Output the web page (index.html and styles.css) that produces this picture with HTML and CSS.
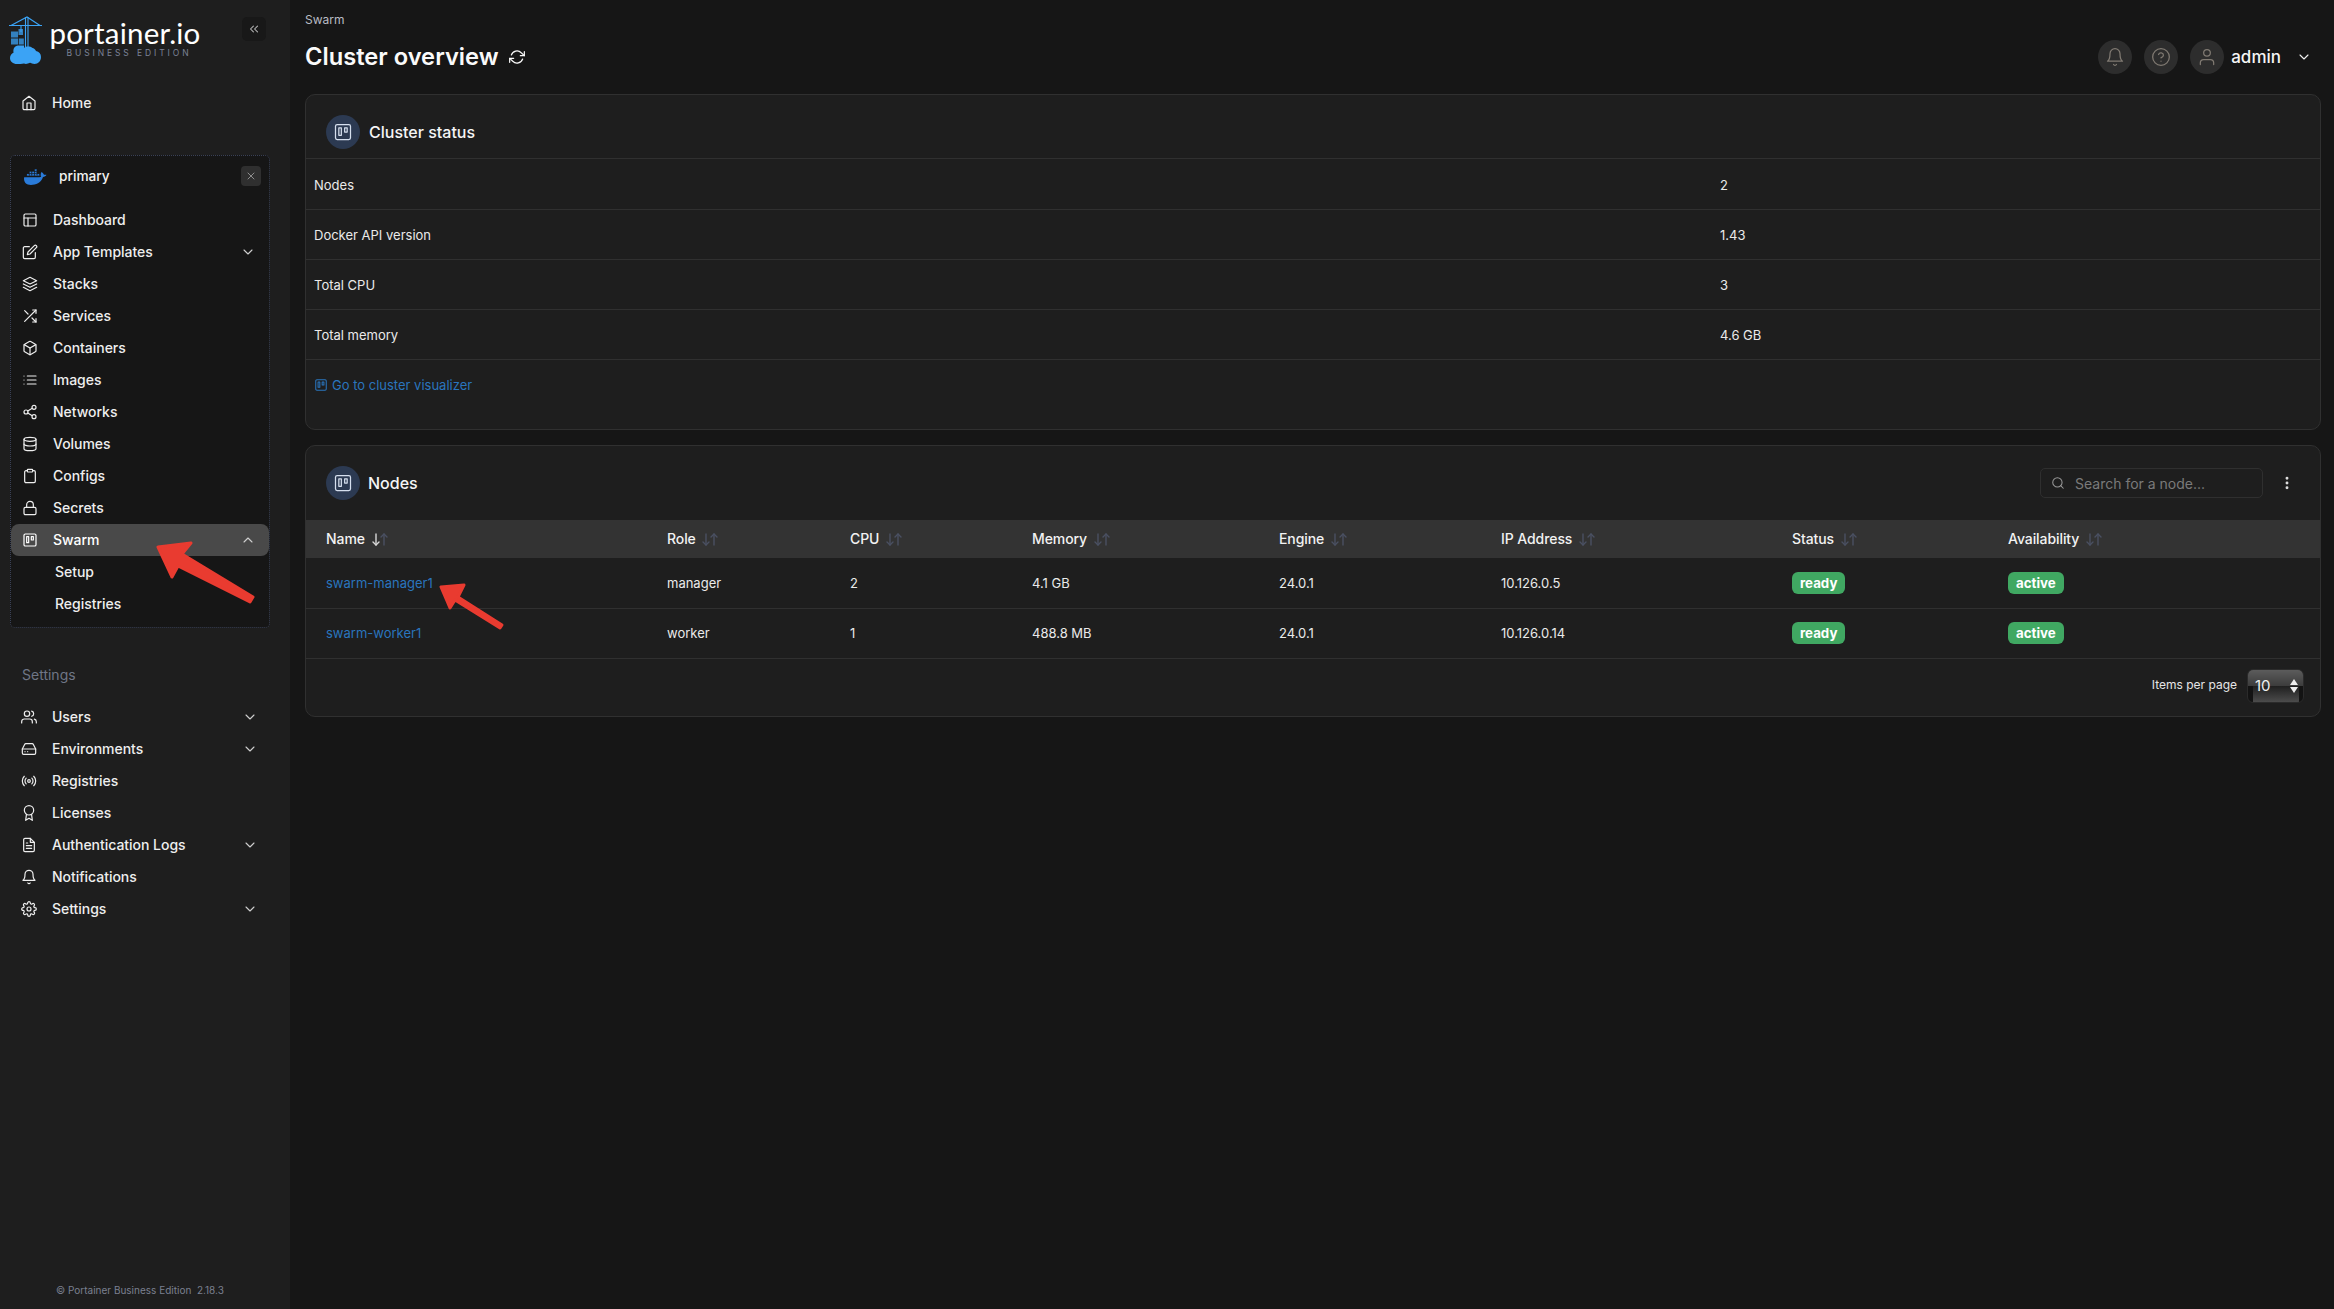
FILE: index.html
```html
<!DOCTYPE html>
<html lang="en">
<head>
<meta charset="utf-8">
<title>Cluster overview</title>
<link rel="stylesheet" href="styles.css">
</head>
<body>
<svg class="sprite" xmlns="http://www.w3.org/2000/svg">
<symbol id="i-home" viewBox="0 0 24 24"><path d="M3 9l9-7 9 7v11a2 2 0 0 1-2 2H5a2 2 0 0 1-2-2z"/><polyline points="9 22 9 12 15 12 15 22"/></symbol>
<symbol id="i-layout" viewBox="0 0 24 24"><rect x="3" y="3" width="18" height="18" rx="2"/><line x1="3" y1="9" x2="21" y2="9"/><line x1="9" y1="21" x2="9" y2="9"/></symbol>
<symbol id="i-edit" viewBox="0 0 24 24"><path d="M11 4H4a2 2 0 0 0-2 2v14a2 2 0 0 0 2 2h14a2 2 0 0 0 2-2v-7"/><path d="M18.5 2.5a2.121 2.121 0 0 1 3 3L12 15l-4 1 1-4 9.5-9.5z"/></symbol>
<symbol id="i-layers" viewBox="0 0 24 24"><polygon points="12 2 2 7 12 12 22 7 12 2"/><polyline points="2 17 12 22 22 17"/><polyline points="2 12 12 17 22 12"/></symbol>
<symbol id="i-shuffle" viewBox="0 0 24 24"><polyline points="16 3 21 3 21 8"/><line x1="4" y1="20" x2="21" y2="3"/><polyline points="21 16 21 21 16 21"/><line x1="15" y1="15" x2="21" y2="21"/><line x1="4" y1="4" x2="9" y2="9"/></symbol>
<symbol id="i-box" viewBox="0 0 24 24"><path d="M21 16V8a2 2 0 0 0-1-1.73l-7-4a2 2 0 0 0-2 0l-7 4A2 2 0 0 0 3 8v8a2 2 0 0 0 1 1.73l7 4a2 2 0 0 0 2 0l7-4A2 2 0 0 0 21 16z"/><polyline points="3.27 6.96 12 12.01 20.73 6.96"/><line x1="12" y1="22.08" x2="12" y2="12"/></symbol>
<symbol id="i-list" viewBox="0 0 24 24"><line x1="8" y1="6" x2="21" y2="6"/><line x1="8" y1="12" x2="21" y2="12"/><line x1="8" y1="18" x2="21" y2="18"/><line x1="3" y1="6" x2="3.01" y2="6"/><line x1="3" y1="12" x2="3.01" y2="12"/><line x1="3" y1="18" x2="3.01" y2="18"/></symbol>
<symbol id="i-share" viewBox="0 0 24 24"><circle cx="18" cy="5" r="3"/><circle cx="6" cy="12" r="3"/><circle cx="18" cy="19" r="3"/><line x1="8.59" y1="13.51" x2="15.42" y2="17.49"/><line x1="15.41" y1="6.51" x2="8.59" y2="10.49"/></symbol>
<symbol id="i-database" viewBox="0 0 24 24"><ellipse cx="12" cy="5" rx="9" ry="3"/><path d="M21 12c0 1.66-4 3-9 3s-9-1.34-9-3"/><path d="M3 5v14c0 1.66 4 3 9 3s9-1.34 9-3V5"/></symbol>
<symbol id="i-clipboard" viewBox="0 0 24 24"><path d="M16 4h2a2 2 0 0 1 2 2v14a2 2 0 0 1-2 2H6a2 2 0 0 1-2-2V6a2 2 0 0 1 2-2h2"/><rect x="8" y="2" width="8" height="4" rx="1"/></symbol>
<symbol id="i-lock" viewBox="0 0 24 24"><rect x="3" y="11" width="18" height="11" rx="2"/><path d="M7 11V7a5 5 0 0 1 10 0v4"/></symbol>
<symbol id="i-trello" viewBox="0 0 24 24"><rect x="3" y="3" width="18" height="18" rx="2"/><rect x="7" y="7" width="3" height="9"/><rect x="14" y="7" width="3" height="5"/></symbol>
<symbol id="i-users" viewBox="0 0 24 24"><path d="M17 21v-2a4 4 0 0 0-4-4H5a4 4 0 0 0-4 4v2"/><circle cx="9" cy="7" r="4"/><path d="M23 21v-2a4 4 0 0 0-3-3.87"/><path d="M16 3.13a4 4 0 0 1 0 7.75"/></symbol>
<symbol id="i-drive" viewBox="0 0 24 24"><line x1="22" y1="12" x2="2" y2="12"/><path d="M5.45 5.11L2 12v6a2 2 0 0 0 2 2h16a2 2 0 0 0 2-2v-6l-3.45-6.89A2 2 0 0 0 16.76 4H7.24a2 2 0 0 0-1.79 1.11z"/><line x1="6" y1="16" x2="6.01" y2="16"/><line x1="10" y1="16" x2="10.01" y2="16"/></symbol>
<symbol id="i-radio" viewBox="0 0 24 24"><circle cx="12" cy="12" r="2"/><path d="M16.24 7.76a6 6 0 0 1 0 8.49m-8.48-.01a6 6 0 0 1 0-8.49m11.31-2.82a10 10 0 0 1 0 14.14m-14.14 0a10 10 0 0 1 0-14.14"/></symbol>
<symbol id="i-award" viewBox="0 0 24 24"><circle cx="12" cy="8" r="7"/><polyline points="8.21 13.89 7 23 12 20 17 23 15.79 13.88"/></symbol>
<symbol id="i-file" viewBox="0 0 24 24"><path d="M14 2H6a2 2 0 0 0-2 2v16a2 2 0 0 0 2 2h12a2 2 0 0 0 2-2V8z"/><polyline points="14 2 14 8 20 8"/><line x1="16" y1="13" x2="8" y2="13"/><line x1="16" y1="17" x2="8" y2="17"/><polyline points="10 9 9 9 8 9"/></symbol>
<symbol id="i-bell" viewBox="0 0 24 24"><path d="M18 8A6 6 0 0 0 6 8c0 7-3 9-3 9h18s-3-2-3-9"/><path d="M13.73 21a2 2 0 0 1-3.46 0"/></symbol>
<symbol id="i-gear" viewBox="0 0 24 24"><circle cx="12" cy="12" r="3"/><path d="M19.4 15a1.65 1.65 0 0 0 .33 1.82l.06.06a2 2 0 0 1 0 2.83 2 2 0 0 1-2.83 0l-.06-.06a1.65 1.65 0 0 0-1.82-.33 1.65 1.65 0 0 0-1 1.51V21a2 2 0 0 1-2 2 2 2 0 0 1-2-2v-.09A1.65 1.65 0 0 0 9 19.4a1.65 1.65 0 0 0-1.82.33l-.06.06a2 2 0 0 1-2.83 0 2 2 0 0 1 0-2.83l.06-.06a1.65 1.65 0 0 0 .33-1.82 1.65 1.65 0 0 0-1.51-1H3a2 2 0 0 1-2-2 2 2 0 0 1 2-2h.09A1.65 1.65 0 0 0 4.6 9a1.65 1.65 0 0 0-.33-1.82l-.06-.06a2 2 0 0 1 0-2.83 2 2 0 0 1 2.83 0l.06.06a1.65 1.65 0 0 0 1.82.33H9a1.65 1.65 0 0 0 1-1.51V3a2 2 0 0 1 2-2 2 2 0 0 1 2 2v.09a1.65 1.65 0 0 0 1 1.51 1.65 1.65 0 0 0 1.82-.33l.06-.06a2 2 0 0 1 2.83 0 2 2 0 0 1 0 2.83l-.06.06a1.65 1.65 0 0 0-.33 1.82V9a1.65 1.65 0 0 0 1.51 1H21a2 2 0 0 1 2 2 2 2 0 0 1-2 2h-.09a1.65 1.65 0 0 0-1.51 1z"/></symbol>
<symbol id="i-refresh" viewBox="0 0 24 24"><polyline points="23 4 23 10 17 10"/><polyline points="1 20 1 14 7 14"/><path d="M3.51 9a9 9 0 0 1 14.85-3.36L23 10M1 14l4.64 4.36A9 9 0 0 0 20.49 15"/></symbol>
<symbol id="i-help" viewBox="0 0 24 24"><circle cx="12" cy="12" r="10"/><path d="M9.09 9a3 3 0 0 1 5.83 1c0 2-3 3-3 3"/><line x1="12" y1="17" x2="12.01" y2="17"/></symbol>
<symbol id="i-user" viewBox="0 0 24 24"><path d="M20 21v-2a4 4 0 0 0-4-4H8a4 4 0 0 0-4 4v2"/><circle cx="12" cy="7" r="4"/></symbol>
<symbol id="i-search" viewBox="0 0 24 24"><circle cx="11" cy="11" r="8"/><line x1="21" y1="21" x2="16.65" y2="16.65"/></symbol>
<symbol id="i-more" viewBox="0 0 24 24"><circle cx="12" cy="12" r="1"/><circle cx="12" cy="5" r="1"/><circle cx="12" cy="19" r="1"/></symbol>
<symbol id="i-chevrons" viewBox="0 0 24 24"><polyline points="11 17 6 12 11 7"/><polyline points="18 17 13 12 18 7"/></symbol>
<symbol id="i-down" viewBox="0 0 24 24"><polyline points="6 9 12 15 18 9"/></symbol>
<symbol id="i-up" viewBox="0 0 24 24"><polyline points="18 15 12 9 6 15"/></symbol>
<symbol id="i-x" viewBox="0 0 24 24"><line x1="18" y1="6" x2="6" y2="18"/><line x1="6" y1="6" x2="18" y2="18"/></symbol>
<symbol id="i-adown" viewBox="0 0 8 13"><line x1="4" y1="1" x2="4" y2="12"/><polyline points="1 9 4 12 7 9"/></symbol>
<symbol id="i-aup" viewBox="0 0 8 13"><line x1="4" y1="12" x2="4" y2="1"/><polyline points="1 4 4 1 7 4"/></symbol>
</svg>

<div class="app">
  <aside class="sidebar">
    <div class="brand">
      <svg class="logo-mark" viewBox="0 0 36 48" xmlns="http://www.w3.org/2000/svg">
        <g class="crane">
          <path d="M0 9.500H33M2 9.500L18 1L31 9.500"/>
          <path d="M16.500 1V34M19 1V34"/>
          <path d="M12 9.500V16"/>
        </g>
        <rect class="logo-box" x="9.500" y="13" width="4.500" height="6"/>
        <rect class="logo-box" x="2" y="15.500" width="7" height="6"/>
        <rect class="logo-box" x="2" y="22.500" width="7" height="6"/>
        <rect class="logo-box" x="9.800" y="22.500" width="5" height="6"/>
        <path class="logo-cloud" d="M8 48c-4 0-7-2.500-7-6 0-2.500 1.500-4.500 3.500-5.200C4 33.500 5 30 9 29.500h6V32c2-1.800 6-1.800 8-.3 2 .4 3.500 1.800 4 3.300 3 .6 5 2.800 5 6 0 3.800-2.800 7-6.500 7-2 0-3.200-.8-4.500-1.200-2 1-4 1.400-6 .8-2 .5-4 .4-6 .4z"/>
      </svg>
      <div class="wordmark">
        <span class="wordmark-name">portainer.io</span>
        <span class="wordmark-sub">BUSINESS EDITION</span>
      </div>
      <button class="collapse" type="button"><svg class="ic ic-14"><use href="#i-chevrons"/></svg></button>
    </div>

    <nav class="nav-list nav-top">
      <a class="nav-item"><svg class="ic"><use href="#i-home"/></svg><span>Home</span></a>
    </nav>

    <section class="env">
      <div class="env-head">
        <svg class="docker" viewBox="0 0 24 17" xmlns="http://www.w3.org/2000/svg">
          <path d="M23.800 7.100c-.6-.4-2-.6-3-.3-.1-1-.8-1.900-1.800-2.600l-.6-.4-.4.600c-.5.800-.7 2-.6 2.900.1.500.2 1 .5 1.400-.4.200-1 .5-1.900.5H.2c-.3 1.500-.3 3.200.5 4.700.7 1.300 1.800 2.300 3.300 2.900 2 .7 4.700.6 7 0 2.600-.6 4.800-1.800 6.500-3.700 1.200-1.300 1.900-2.900 2.300-4.200h.3c1.100 0 2-.4 2.700-1.200.3-.3.500-.6.600-.9z"/>
          <rect x="3" y="5.800" width="2.200" height="2"/><rect x="5.700" y="5.800" width="2.200" height="2"/><rect x="8.400" y="5.800" width="2.200" height="2"/><rect x="11.100" y="5.800" width="2.200" height="2"/><rect x="13.800" y="5.800" width="2.200" height="2"/>
          <rect x="5.700" y="3.300" width="2.200" height="2"/><rect x="8.400" y="3.300" width="2.200" height="2"/><rect x="11.100" y="3.300" width="2.200" height="2"/>
          <rect x="11.100" y=".8" width="2.200" height="2"/>
        </svg>
        <span class="env-name">primary</span>
        <button class="env-close" type="button"><svg class="ic ic-12"><use href="#i-x"/></svg></button>
      </div>
      <nav class="nav-list">
        <a class="nav-item"><svg class="ic"><use href="#i-layout"/></svg><span>Dashboard</span></a>
        <a class="nav-item"><svg class="ic"><use href="#i-edit"/></svg><span>App Templates</span><svg class="ic chev"><use href="#i-down"/></svg></a>
        <a class="nav-item"><svg class="ic"><use href="#i-layers"/></svg><span>Stacks</span></a>
        <a class="nav-item"><svg class="ic"><use href="#i-shuffle"/></svg><span>Services</span></a>
        <a class="nav-item"><svg class="ic"><use href="#i-box"/></svg><span>Containers</span></a>
        <a class="nav-item"><svg class="ic"><use href="#i-list"/></svg><span>Images</span></a>
        <a class="nav-item"><svg class="ic"><use href="#i-share"/></svg><span>Networks</span></a>
        <a class="nav-item"><svg class="ic"><use href="#i-database"/></svg><span>Volumes</span></a>
        <a class="nav-item"><svg class="ic"><use href="#i-clipboard"/></svg><span>Configs</span></a>
        <a class="nav-item"><svg class="ic"><use href="#i-lock"/></svg><span>Secrets</span></a>
        <a class="nav-item is-active"><svg class="ic"><use href="#i-trello"/></svg><span>Swarm</span><svg class="ic chev"><use href="#i-up"/></svg></a>
        <a class="nav-item nav-sub"><span>Setup</span></a>
        <a class="nav-item nav-sub"><span>Registries</span></a>
      </nav>
    </section>

    <div class="nav-label">Settings</div>
    <nav class="nav-list nav-settings">
      <a class="nav-item"><svg class="ic"><use href="#i-users"/></svg><span>Users</span><svg class="ic chev"><use href="#i-down"/></svg></a>
      <a class="nav-item"><svg class="ic"><use href="#i-drive"/></svg><span>Environments</span><svg class="ic chev"><use href="#i-down"/></svg></a>
      <a class="nav-item"><svg class="ic"><use href="#i-radio"/></svg><span>Registries</span></a>
      <a class="nav-item"><svg class="ic"><use href="#i-award"/></svg><span>Licenses</span></a>
      <a class="nav-item"><svg class="ic"><use href="#i-file"/></svg><span>Authentication Logs</span><svg class="ic chev"><use href="#i-down"/></svg></a>
      <a class="nav-item"><svg class="ic"><use href="#i-bell"/></svg><span>Notifications</span></a>
      <a class="nav-item"><svg class="ic"><use href="#i-gear"/></svg><span>Settings</span><svg class="ic chev"><use href="#i-down"/></svg></a>
    </nav>

    <footer class="side-foot">© Portainer Business Edition&nbsp; 2.18.3</footer>
  </aside>

  <main class="main">
    <header class="topbar">
      <div class="crumbs">
        <div class="crumb">Swarm</div>
        <h1 class="page-title">Cluster overview <svg class="ic refresh"><use href="#i-refresh"/></svg></h1>
      </div>
      <div class="user-area">
        <span class="round"><svg class="ic ic-20"><use href="#i-bell"/></svg></span>
        <span class="round"><svg class="ic ic-20"><use href="#i-help"/></svg></span>
        <span class="round"><svg class="ic ic-20"><use href="#i-user"/></svg></span>
        <span class="user-name">admin</span>
        <svg class="ic user-chev"><use href="#i-down"/></svg>
      </div>
    </header>

    <section class="card card-status">
      <div class="card-head">
        <span class="card-badge"><svg class="ic ic-20"><use href="#i-trello"/></svg></span>
        <h2 class="card-title">Cluster status</h2>
      </div>
      <table class="kv">
        <tr><td>Nodes</td><td>2</td></tr>
        <tr><td>Docker API version</td><td>1.43</td></tr>
        <tr><td>Total CPU</td><td>3</td></tr>
        <tr><td>Total memory</td><td>4.6 GB</td></tr>
      </table>
      <div class="visualizer"><a class="link"><svg class="ic ic-14"><use href="#i-trello"/></svg>Go to cluster visualizer</a></div>
    </section>

    <section class="card card-nodes">
      <div class="card-head">
        <span class="card-badge"><svg class="ic ic-20"><use href="#i-trello"/></svg></span>
        <h2 class="card-title">Nodes</h2>
        <label class="search"><svg class="ic ic-14"><use href="#i-search"/></svg><span>Search for a node...</span></label>
        <svg class="ic kebab"><use href="#i-more"/></svg>
      </div>
      <table class="nodes">
        <colgroup><col class="c1"><col class="c2"><col class="c3"><col class="c4"><col class="c5"><col class="c6"><col class="c7"><col class="c8"></colgroup>
        <thead>
          <tr>
            <th>Name <span class="sort is-sorted"><svg><use href="#i-adown"/></svg><svg><use href="#i-aup"/></svg></span></th>
            <th>Role <span class="sort"><svg><use href="#i-adown"/></svg><svg><use href="#i-aup"/></svg></span></th>
            <th>CPU <span class="sort"><svg><use href="#i-adown"/></svg><svg><use href="#i-aup"/></svg></span></th>
            <th>Memory <span class="sort"><svg><use href="#i-adown"/></svg><svg><use href="#i-aup"/></svg></span></th>
            <th>Engine <span class="sort"><svg><use href="#i-adown"/></svg><svg><use href="#i-aup"/></svg></span></th>
            <th>IP Address <span class="sort"><svg><use href="#i-adown"/></svg><svg><use href="#i-aup"/></svg></span></th>
            <th>Status <span class="sort"><svg><use href="#i-adown"/></svg><svg><use href="#i-aup"/></svg></span></th>
            <th>Availability <span class="sort"><svg><use href="#i-adown"/></svg><svg><use href="#i-aup"/></svg></span></th>
          </tr>
        </thead>
        <tbody>
          <tr><td><a class="link">swarm-manager1</a></td><td>manager</td><td>2</td><td>4.1 GB</td><td>24.0.1</td><td>10.126.0.5</td><td><span class="pill">ready</span></td><td><span class="pill">active</span></td></tr>
          <tr><td><a class="link">swarm-worker1</a></td><td>worker</td><td>1</td><td>488.8 MB</td><td>24.0.1</td><td>10.126.0.14</td><td><span class="pill">ready</span></td><td><span class="pill">active</span></td></tr>
        </tbody>
      </table>
      <div class="pager">
        <span class="pager-label">Items per page</span>
        <span class="select"><span class="select-face"><span>10</span><span class="select-arrows"></span></span></span>
      </div>
    </section>
  </main>
</div>

<svg class="mark mark-swarm" viewBox="0 0 100 66" xmlns="http://www.w3.org/2000/svg"><path d="M3 7 L36 3 L27 14 L98 57 L95 62 L23 26 L17 37 Z"/></svg>
<svg class="mark mark-node" viewBox="0 0 68 50" xmlns="http://www.w3.org/2000/svg"><path d="M3 5 L26 3 L20 15 L64 43 L62 46 L17 18 L12 26 Z"/></svg>
</body>
</html>
```
FILE: styles.css
```css
* { box-sizing: border-box; }
html, body { margin: 0; height: 100%; }
body {
  background: #161616;
  color: #f2f2f2;
  font-family: Inter, "Liberation Sans", sans-serif;
  font-size: 14px;
  overflow: hidden;
  position: relative;
}
.sprite { display: none; }
.ic {
  width: 16px;
  height: 16px;
  fill: none;
  stroke: currentColor;
  stroke-width: 1.8;
  stroke-linecap: round;
  stroke-linejoin: round;
  flex: none;
}
.ic-12 { width: 12px; height: 12px; }
.ic-14 { width: 14px; height: 14px; }
.ic-20 { width: 20px; height: 20px; stroke-width: 1.5; }

.app { display: flex; height: 1309px; }

/* Sidebar */
.sidebar {
  width: 290px;
  flex: none;
  background: #1e1e1e;
  display: flex;
  flex-direction: column;
}
.brand {
  height: 87px;
  display: flex;
  align-items: flex-start;
  position: relative;
  padding: 16px 24px 0 9px;
}
.logo-mark { width: 36px; height: 48px; flex: none; }
.crane path { fill: none; stroke: #3ba3f5; stroke-width: 1.1; }
.logo-box { fill: #3ba3f5; opacity: .75; }
.logo-cloud { fill: #3ba3f5; }
.wordmark {
  display: flex;
  flex-direction: column;
  align-items: center;
  margin-left: 5px;
  width: 150px;
}
.wordmark-name {
  font-family: Lato, Inter, sans-serif;
  font-size: 29.500px;
  line-height: 34px;
  color: #fff;
  letter-spacing: .2px;
}
.wordmark-sub {
  font-size: 8.500px;
  line-height: 10px;
  letter-spacing: 2.900px;
  color: #7b8296;
  margin-top: -2px;
  margin-left: 8px;
}
.collapse {
  margin-left: auto;
  margin-top: 1px;
  width: 24px;
  height: 24px;
  border: 0;
  border-radius: 5px;
  background: #181818;
  color: #b5b5b5;
  display: flex;
  align-items: center;
  justify-content: center;
  padding: 0;
}
.nav-list { display: flex; flex-direction: column; }
.nav-item {
  height: 32px;
  display: flex;
  align-items: center;
  gap: 15px;
  padding: 0 12px 0 11px;
  color: #eee;
  border-radius: 8px;
  font-weight: 500;
  letter-spacing: -.03px;
}
.nav-item span { flex: 1; margin-bottom: 2px; }
.chev { stroke-width: 1.6; color: #d0d0d0; margin-right: 1px; }
.nav-top .nav-item, .nav-settings .nav-item { padding: 0 31px 0 21px; }
.env {
  margin: 36px 20px 0 10px;
  height: 473px;
  background: #161616;
  border: 1px dotted #3a4156;
  border-radius: 5px;
  padding-top: 4px;
}
.env-head {
  height: 32px;
  display: flex;
  align-items: center;
  padding: 0 8px 0 13px;
  margin-bottom: 12px;
}
.docker { width: 23px; height: 17px; fill: #2a7bd9; flex: none; }
.docker rect { stroke: #161616; stroke-width: .25; }
.env-name { flex: 1; margin-left: 12px; font-weight: 500; color: #f2f2f2; font-size: 13.700px; }
.env-close {
  width: 20px;
  height: 20px;
  border: 0;
  border-radius: 4px;
  background: #2f2f2f;
  color: #9a9a9a;
  padding: 0;
  display: flex;
  align-items: center;
  justify-content: center;
}
.is-active { background: #494949; color: #fff; }
.nav-sub { padding-left: 44px; }
.nav-label {
  margin: 37px 0 16px 22px;
  line-height: 20px;
  color: #6f7686;
  font-weight: 400;
}
.side-foot {
  margin-top: auto;
  margin-bottom: 12px;
  padding-left: 56px;
  font-size: 10px;
  line-height: 14px;
  color: #7b8090;
  white-space: nowrap;
}

/* Main */
.main { flex: 1; min-width: 0; padding: 0 13px 0 15px; }
.topbar { height: 94px; display: flex; justify-content: space-between; }
.crumb { font-size: 12px; line-height: 16px; color: #b9bcc4; margin-top: 12px; }
.page-title {
  margin: 13px 0 0;
  font-size: 23.700px;
  line-height: 32px;
  font-weight: 600;
  color: #fafafa;
  display: flex;
  align-items: center;
  gap: 10px;
}
.refresh { margin-top: -1px; }
.user-area {
  display: flex;
  align-items: center;
  height: 34px;
  margin-top: 40px;
  padding-right: 9px;
}
.round {
  width: 34px;
  height: 34px;
  border-radius: 50%;
  background: #2d2d2d;
  color: #807a72;
  display: flex;
  align-items: center;
  justify-content: center;
  margin-right: 12px;
}
.round:nth-child(3) { margin-right: 7px; }
.user-name { font-size: 17px; font-weight: 500; color: #f5f5f5; }
.user-chev { margin-left: 15px; stroke-width: 1.6; }

.card {
  background: #1e1e1e;
  border: 1px solid #303030;
  border-radius: 10px;
  overflow: hidden;
}
.card-status { height: 336px; }
.card-nodes { height: 272px; margin-top: 15px; }
.card-head {
  height: 64px;
  display: flex;
  align-items: center;
  padding: 11px 20px 0;
  border-bottom: 1px solid #303030;
}
.card-nodes .card-head { height: 74px; padding-top: 0; border-bottom: 0; }
.card-badge {
  width: 34px;
  height: 34px;
  border-radius: 50%;
  background: #2c3a52;
  color: #d5dfee;
  display: flex;
  align-items: center;
  justify-content: center;
  flex: none;
}
.card-title { margin: 0 0 0 9px; font-size: 16px; line-height: 20px; font-weight: 500; color: #f5f5f5; }
.card-nodes .card-title { margin-left: 8px; }
.kv { width: 100%; border-collapse: collapse; table-layout: fixed; font-size: 13px; }
.kv td { height: 50px; padding: 2px 8px 0; border-bottom: 1px solid #303030; color: #eaeaea; }
.kv td:first-child { width: 1406px; }
.visualizer { height: 50px; padding-left: 8px; display: flex; align-items: center; }
.link { color: #2a75bd; font-size: 13px; display: inline-flex; align-items: center; gap: 4px; }

.search {
  margin-left: auto;
  width: 223px;
  height: 30px;
  border: 1px solid #2f2f2f;
  border-radius: 5px;
  display: flex;
  align-items: center;
  gap: 10px;
  padding: 0 10px;
  font-size: 14px;
  color: #7a7a7a;
}
.search .ic { color: #999; }
.kebab { margin-left: 16px; margin-right: 5px; color: #ddd; stroke-width: 2.400; }

.nodes { width: 100%; border-collapse: collapse; table-layout: fixed; font-size: 13px; }
.c1 { width: 341px; }
.c2 { width: 183px; }
.c3 { width: 182px; }
.c4 { width: 247px; }
.c5 { width: 222px; }
.c6 { width: 291px; }
.c7 { width: 216px; }
.nodes th {
  height: 38px;
  background: #333;
  text-align: left;
  font-weight: 500;
  font-size: 14px;
  padding: 0 0 2px 20px;
  color: #f2f2f2;
  white-space: nowrap;
  letter-spacing: -.08px;
}
.sort { display: inline-flex; margin-left: 3px; vertical-align: -2px; color: #4a5062; }
.sort svg { width: 8px; height: 13px; fill: none; stroke: currentColor; stroke-width: 1.4; stroke-linecap: round; stroke-linejoin: round; }
.is-sorted svg:first-child { color: #d8d8d8; }
.nodes td { height: 50px; padding: 0 0 0 20px; border-bottom: 1px solid #303030; color: #eaeaea; }
.pill {
  display: inline-block;
  padding: 0 8px;
  height: 22px;
  line-height: 22px;
  border-radius: 6px;
  background: #40a862;
  color: #fff;
  font-weight: 700;
  font-size: 13.300px;
}
.pager {
  height: 60px;
  display: flex;
  align-items: center;
  justify-content: flex-end;
  padding: 0 16px 6px 0;
  gap: 10px;
  font-size: 12px;
  color: #e6e6e6;
}
.pager-label { margin-bottom: 2px; }
.select {
  width: 57px;
  height: 34px;
  background: #131313;
  border: 1px solid #2b2b2b;
  border-radius: 6px;
  display: flex;
}
.select-face {
  width: 100%;
  display: flex;
  align-items: center;
  justify-content: space-between;
  padding: 0 5px 0 7px;
  font-size: 15px;
  color: #f0f0f0;
  background:
    linear-gradient(#5c5c5c, #3c3c3c) top / 100% 50% no-repeat,
    linear-gradient(#1f1f1f, #4c4c4c) 5px 100% / calc(100% - 9px) 50% no-repeat;
  border-radius: 5px;
}
.select-arrows {
  width: 8px;
  height: 16px;
  position: relative;
  flex: none;
}
.select-arrows::before, .select-arrows::after {
  content: "";
  position: absolute;
  left: 0;
  border-left: 4px solid transparent;
  border-right: 4px solid transparent;
}
.select-arrows::before { top: 1px; border-bottom: 6px solid #eee; }
.select-arrows::after { bottom: 1px; border-top: 6px solid #eee; }

/* Annotation arrows drawn over the screenshot */
.mark { position: absolute; fill: #e93b30; stroke: #e93b30; stroke-width: 3; stroke-linejoin: round; }
.mark-swarm { left: 155px; top: 540px; width: 100px; height: 66px; }
.mark-node { left: 438px; top: 582px; width: 68px; height: 50px; }
```
